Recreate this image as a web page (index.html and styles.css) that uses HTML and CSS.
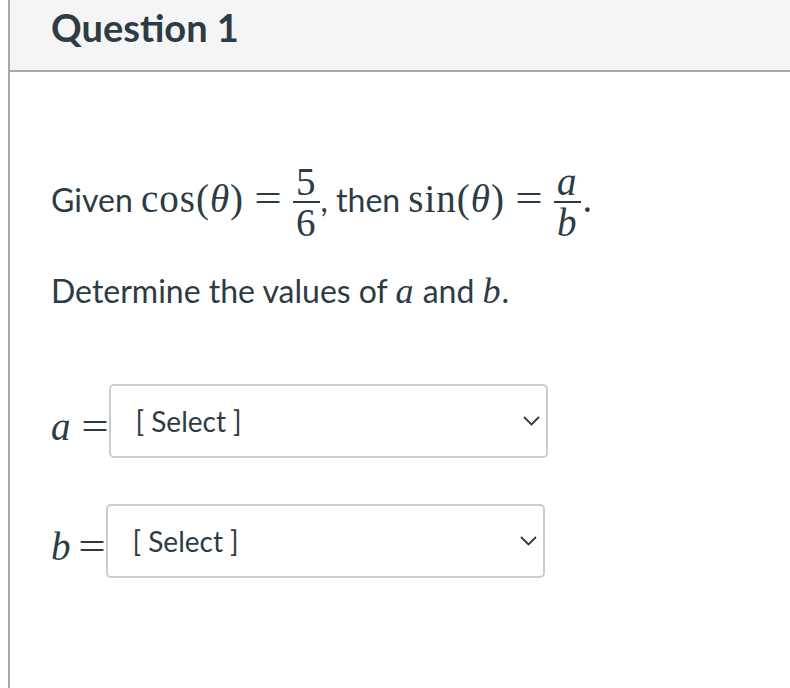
FILE: index.html
```html
<!DOCTYPE html>
<html lang="en">
<head>
<meta charset="utf-8">
<title>Question 1</title>
<link rel="stylesheet" href="styles.css">
</head>
<body>
<div class="card">
  <div class="header"><h2 class="title">Question 1</h2></div>
  <div class="content">
    <p class="line first">Given <span class="m">cos(<i>θ</i>)</span><span class="m rel"><span class="eqg">=</span></span><span class="m frac"><span class="num">5</span><span class="den">6</span></span>, then <span class="m">sin(<i>θ</i>)</span><span class="m rel"><span class="eqg">=</span></span><span class="m frac"><span class="num"><i>a</i></span><span class="den"><i>b</i></span></span><span class="m dot">.</span></p>
    <p class="line second">Determine the values of <span class="m small"><i>a</i></span> and <span class="m small"><i>b</i></span>.</p>
    <div class="answer row-a">
      <span class="label m"><i>a</i><span class="eq"><span class="eqg">=</span></span></span>
      <div class="select"><span class="select-text">[ Select ]</span>
        <svg class="chev" width="17" height="10" viewBox="0 0 17 10"><path d="M1 1 L8.5 8.5 L16 1" fill="none" stroke="#2d3b45" stroke-width="1.8"/></svg>
      </div>
    </div>
    <div class="answer row-b">
      <span class="label m"><i>b</i><span class="eq"><span class="eqg">=</span></span></span>
      <div class="select"><span class="select-text">[ Select ]</span>
        <svg class="chev" width="17" height="10" viewBox="0 0 17 10"><path d="M1 1 L8.5 8.5 L16 1" fill="none" stroke="#2d3b45" stroke-width="1.8"/></svg>
      </div>
    </div>
  </div>
</div>
</body>
</html>
```
FILE: styles.css
```css
html, body {
  margin: 0;
  padding: 0;
  background: #fff;
  overflow: hidden;
}
body {
  font-family: Lato, "Liberation Sans", sans-serif;
  color: #2d3b45;
  height: 688px;
}
.card {
  margin-left: 8px;
  border-left: 2px solid #a8a8a8;
  height: 688px;
}
.header {
  background: #f5f5f5;
  border-bottom: 2px solid #a8a8a8;
  height: 70px;
  padding-left: 41px;
}
.title {
  margin: 0;
  font-size: 38px;
  font-weight: 700;
  line-height: 54px;
}
.content {
  padding: 0 41px;
}
.line {
  margin: 0;
  font-size: 32px;
}
.first {
  line-height: 90px;
  margin-top: 82px;
}
.second {
  line-height: 40px;
  margin-top: 26px;
}
.m {
  font-family: "Liberation Serif", "DejaVu Serif", serif;
  font-size: 39px;
  letter-spacing: 1px;
}
.m i {
  font-style: italic;
}
.rel {
  display: inline-block;
  margin: 0 12px 0 13px;
}
.eqg {
  display: inline-block;
  transform: scaleX(1.25);
}
.frac {
  display: inline-block;
  text-align: center;
  vertical-align: -24px;
  line-height: 1;
  padding: 0 1px;
}
.num {
  display: block;
  padding: 0 3px;
  border-bottom: 2px solid #2d3b45;
}
.den {
  display: block;
}
.dot {
  margin-left: 1px;
}
.small {
  font-size: 36px;
  line-height: 1;
}
.answer {
  display: flex;
  align-items: center;
  gap: 2px;
}
.row-a {
  margin-top: 73px;
}
.row-b {
  margin-top: 46px;
}
.label {
  display: flex;
  align-items: baseline;
  padding-top: 11px;
}
.eq {
  margin-left: 12px;
}
.row-b .eq {
  margin-left: 9px;
}
.select {
  box-sizing: border-box;
  width: 439px;
  height: 74px;
  border: 2px solid #cccccc;
  border-radius: 5px;
  display: flex;
  align-items: center;
  padding: 0 6px 0 25px;
  font-size: 28px;
}
.select-text {
  flex: 1;
}
.chev {
  display: block;
}
```
